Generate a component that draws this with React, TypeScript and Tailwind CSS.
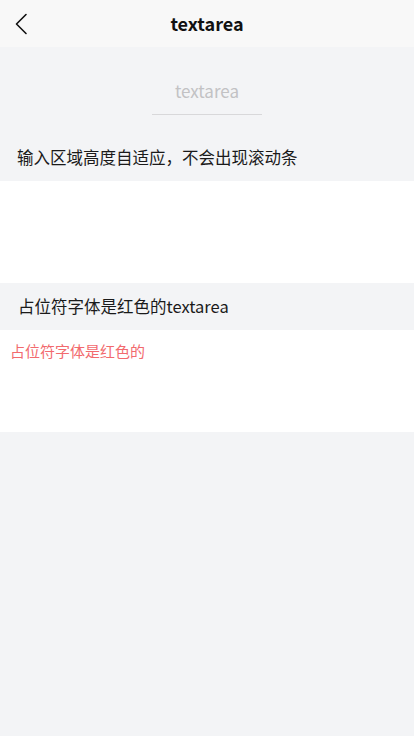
import { useState } from "react";

const font = {
  fontFamily: '"Noto Sans CJK SC", "Noto Sans", sans-serif',
};

function BackIcon() {
  return (
    <svg width="14" height="22" viewBox="0 0 14 22" fill="none">
      <path
        d="M12 1.5 L2.5 11 L12 20.5"
        stroke="#111"
        strokeWidth="1.6"
        strokeLinecap="round"
        strokeLinejoin="round"
      />
    </svg>
  );
}

export default function App() {
  const [first, setFirst] = useState("");
  const [second, setSecond] = useState("");

  return (
    <div className="min-h-[736px] w-full bg-[#f3f4f6]" style={font}>
      <header className="relative flex h-[47px] items-center justify-center bg-[#f8f8f8]">
        <button type="button" className="absolute left-[14px] top-[13px]">
          <BackIcon />
        </button>
        <h1 className="text-[18px] font-bold text-[#111]">textarea</h1>
      </header>

      <div className="flex h-[87px] flex-col items-center pt-[32px]">
        <div className="text-[17px] leading-[24px] text-[#c2c2c4]">textarea</div>
        <div className="mt-[11px] h-px w-[110px] bg-[#d8d8da]" />
      </div>

      <div className="flex h-[47px] items-center px-[17px] text-[16.5px] text-[#1a1a1a]">
        输入区域高度自适应，不会出现滚动条
      </div>
      <div className="h-[102px] bg-white">
        <textarea
          value={first}
          onChange={(e) => setFirst(e.target.value)}
          rows={1}
          className="block w-full resize-none bg-transparent px-[10px] py-[10px] text-[15px] outline-none"
        />
      </div>

      <div className="flex h-[47px] items-center px-[18px] text-[16.5px] text-[#1a1a1a]">
        占位符字体是红色的textarea
      </div>
      <div className="h-[102px] bg-white">
        <textarea
          value={second}
          onChange={(e) => setSecond(e.target.value)}
          placeholder="占位符字体是红色的"
          className="block h-full w-full resize-none bg-transparent px-[10px] pt-[10px] text-[15px] leading-[22px] outline-none placeholder:text-[#f26a6e]"
        />
      </div>
    </div>
  );
}
